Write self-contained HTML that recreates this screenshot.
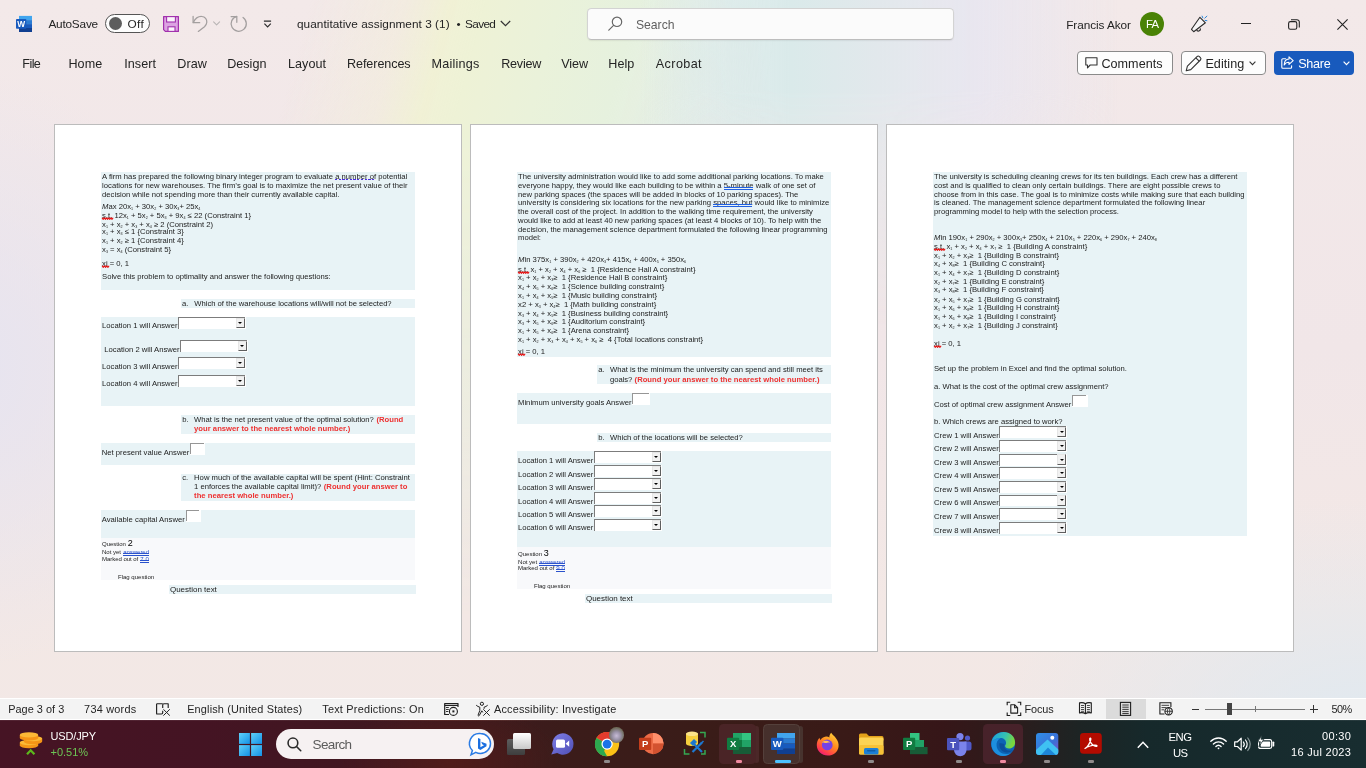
<!DOCTYPE html>
<html lang="en"><head><meta charset="utf-8"><title>quantitative assignment 3 (1) - Word</title>
<style>
*{box-sizing:border-box;margin:0;padding:0}
html,body{width:1366px;height:768px;overflow:hidden}
body{position:relative;font-family:"Liberation Sans",sans-serif;color:#222;
 background:
  radial-gradient(ellipse 380px 230px at 1366px 730px, rgba(224,233,240,1), rgba(224,233,240,0) 100%),
  radial-gradient(ellipse 260px 300px at -40px 370px, rgba(230,228,240,1), rgba(230,228,240,0) 100%),
  linear-gradient(to bottom,#f3e9e9 0%,#f1e6e8 45%,#f3e8e5 80%,#f2e8e6 100%);
}
.t{position:absolute;white-space:pre;}
.ov{position:absolute;left:0;top:0;width:1366px;height:698px;pointer-events:none}
.ovA{background:linear-gradient(105deg,rgba(242,238,216,0) 300px,rgba(242,238,216,.5) 392px,rgba(240,241,212,.95) 436px,rgba(238,242,214,1) 470px,rgba(234,242,218,1) 540px,rgba(230,241,222,1) 616px,rgba(226,238,228,.8) 693px,rgba(226,238,228,0) 770px);-webkit-mask-image:linear-gradient(to bottom,#000 0,#000 130px,rgba(0,0,0,.55) 400px,transparent 620px);mask-image:linear-gradient(to bottom,#000 0,#000 130px,rgba(0,0,0,.55) 400px,transparent 620px)}
.ovB{background:linear-gradient(90deg,rgba(220,235,234,0) 640px,rgba(220,235,234,.9) 730px,rgba(218,234,234,1) 790px,rgba(226,232,236,1) 880px,rgba(232,230,240,.9) 980px,rgba(232,230,240,0) 1120px);-webkit-mask-image:linear-gradient(to bottom,#000 0,#000 90px,rgba(0,0,0,.5) 190px,transparent 330px);mask-image:linear-gradient(to bottom,#000 0,#000 90px,rgba(0,0,0,.5) 190px,transparent 330px)}
.ui{color:#242424}
svg{position:absolute;overflow:visible}
.pg{position:absolute;background:#fff;border:1px solid #bcbcbc;width:408px;height:528px;top:124px}
.bb{position:absolute;background:#e8f3f6}
.lb{position:absolute;background:#f8f9fb}
.d{color:#1c1c1c}
.d sub{font-size:3.700px;vertical-align:baseline;position:relative;top:0.500px;line-height:0;letter-spacing:0}
.red{color:#ee3030;font-weight:bold}
.sq{}
.gu{color:#2a50c8;text-decoration:underline double #2a50c8;text-decoration-thickness:.5px;text-decoration-skip-ink:none}
.gu2{text-decoration:underline double rgba(42,80,200,.75);text-decoration-thickness:.4px;text-decoration-skip-ink:none;text-underline-offset:.2px}
.dd{position:absolute;background:#fff}.dd:before{content:"";position:absolute;left:0;top:0;right:1px;bottom:0;border-top:1px solid #7c7c7c;border-left:1px solid #7c7c7c}
.dd i{position:absolute;right:1px;top:0.500px;z-index:1;width:8.700px;height:10.500px;background:#f1f1f1;border:1px solid #5e5e5e;border-top-color:#e6e6e6;border-left-color:#e6e6e6}
.dd i:after{content:"";position:absolute;left:1.300px;top:3.300px;border:2.100px solid transparent;border-top:2.300px solid #000;border-bottom:0}
.ab{position:absolute;background:#fff}.ab:before{content:"";position:absolute;left:0;top:0;right:1.200px;bottom:1.200px;border-top:1px solid #969696;border-left:1px solid #969696}
</style></head><body>
<div id="app" style="position:absolute;left:0;top:0;width:1366px;height:768px;will-change:transform">
<div class="ov ovA"></div><div class="ov ovB"></div>
<svg style="left:16px;top:15px" width="17" height="18" viewBox="0 0 17 18">
<rect x="3" y="0.900" width="13" height="4.300" fill="#41a5ee"/><rect x="3" y="5.100" width="13" height="4.100" fill="#2b7cd3"/><rect x="3" y="9.100" width="13" height="4" fill="#185abd"/><rect x="3" y="13" width="13" height="4" fill="#103f91"/>
<rect x="0" y="4" width="10.300" height="9.800" rx="0.800" fill="#185abd"/>
<text x="5.150" y="12" font-family="Liberation Sans,sans-serif" font-weight="bold" font-size="8.400" fill="#fff" text-anchor="middle">W</text></svg>
<span class="t ui" style="left:48.40px;top:16px;font-size:11.8px;line-height:16px;letter-spacing:-0.196px;">AutoSave</span>
<div style="position:absolute;left:105px;top:13.5px;width:45px;height:19.5px;border:1px solid #555;border-radius:10px;background:#fdfdfd"></div>
<div style="position:absolute;left:108.5px;top:16.7px;width:13px;height:13px;border-radius:50%;background:#5d5d5d"></div>
<span class="t ui" style="left:127.40px;top:16px;font-size:11.8px;line-height:16px;letter-spacing:0.426px;">Off</span>
<svg style="left:163px;top:16px" width="16" height="16" viewBox="0 0 16 16">
<path d="M0.600 0.600h14.800v14.800H2.300L0.600 13.700z" fill="#dca3e2" stroke="#a130ad" stroke-width="1.200" stroke-linejoin="round"/>
<rect x="3.600" y="0.600" width="8.800" height="5.400" fill="#faf4fb" stroke="#a130ad" stroke-width="1.100"/>
<rect x="5" y="10.800" width="7" height="4.600" fill="#faf4fb" stroke="#a130ad" stroke-width="1.100"/></svg>
<svg style="left:0;top:0" width="280" height="40" viewBox="0 0 280 40" fill="none" stroke="#a39f9f" stroke-width="1.250" stroke-linecap="round" stroke-linejoin="round">
<path d="M193.100 16.400V22.700H199.700"/><path d="M193.300 22.500C195 19 198.500 16.300 201.800 16.500c3.300 0.200 5.200 2.800 5 5.800-0.100 1.800-1 3.200-2.300 4.400L198.300 31.400"/>
<path d="M213.600 21.900l3 3 3-3" stroke="#b9b5b5" stroke-width="1.100"/>
<path d="M243.060 17.470A7.600 7.600 0 1 1 236.730 16.360"/><path d="M231.100 16.600H236.800V22.300"/>
<path d="M263.900 21.100h7.200M264.400 23.700l3.200 3.200 3.200-3.200" stroke="#2b2b2b" stroke-width="1.150" stroke-linecap="butt" stroke-linejoin="miter"/></svg>
<span class="t ui" style="left:297.00px;top:16px;font-size:11.8px;line-height:16px;letter-spacing:0.041px;">quantitative assignment 3 (1)</span>
<span class="t ui" style="left:456.40px;top:16px;font-size:11.8px;line-height:16px;">•</span>
<span class="t ui" style="left:465.00px;top:16px;font-size:11.8px;line-height:16px;letter-spacing:-0.632px;">Saved</span>
<svg style="left:500px;top:20px" width="11" height="7" viewBox="0 0 11 7" fill="none" stroke="#333" stroke-width="1.2"><path d="M0.800 1l4.700 4.700 4.700-4.700"/></svg>
<div style="position:absolute;left:587.3px;top:8.2px;width:367.2px;height:31.4px;background:#fbfbfb;border:1px solid #d3d3d3;border-bottom-color:#bdbdbd;border-radius:4.500px;box-shadow:0 1px 1.500px rgba(0,0,0,.07)"></div>
<svg style="left:608px;top:16px" width="15" height="15" viewBox="0 0 15 15" fill="none" stroke="#666" stroke-width="1.2" stroke-linecap="round"><circle cx="9" cy="5.800" r="4.700"/><path d="M5.600 9.300L0.800 14.200"/></svg>
<span class="t" style="left:636.00px;top:17px;font-size:12.2px;line-height:16px;letter-spacing:-0.026px;color:#5f5f5f;">Search</span>
<span class="t ui" style="left:1066.20px;top:17px;font-size:11.8px;line-height:16px;letter-spacing:-0.065px;">Francis Akor</span>
<div style="position:absolute;left:1139.8px;top:11.7px;width:24.3px;height:24.3px;border-radius:50%;background:#498205"></div>
<span class="t" style="left:1146.10px;top:17px;font-size:11.3px;line-height:15px;letter-spacing:-0.858px;color:#fff;">FA</span>
<svg style="left:1180px;top:0" width="40" height="45" viewBox="1180 0 40 45" fill="none" stroke="#2b2b2b" stroke-width="1.100" stroke-linejoin="round" stroke-linecap="round">
<path d="M1196.600 29.600a1.900 1.900 0 0 0 3.700-0.900" /><path d="M1191.500 29.300L1199.900 17.300l5.500 5.500L1193.700 31.700z" fill="#f7f5f6"/>
<path d="M1202.100 16.100l0.700 1.700M1204.800 18.100l2.100-1.900M1205.100 20.400l1.800 0.300" stroke="#2a86d8" stroke-width="1"/></svg>
<div style="position:absolute;left:1240.5px;top:22.6px;width:10.5px;height:1.1px;background:#222"></div>
<svg style="left:1288px;top:19px" width="12" height="11" viewBox="0 0 12 11" fill="none" stroke="#222" stroke-width="1.100"><rect x="0.600" y="2.600" width="8.200" height="7.700" rx="1.800"/><path d="M3 0.700h5.900a2.400 2.400 0 0 1 2.400 2.400v5.400"/></svg>
<svg style="left:1336.500px;top:19px" width="11" height="11" viewBox="0 0 11 11" fill="none" stroke="#222" stroke-width="1.100"><path d="M0.400 0.400l10.200 10.200M10.600 0.400L0.400 10.600"/></svg>
<span class="t ui" style="left:22.30px;top:56px;font-size:12.6px;line-height:17px;letter-spacing:-0.576px;">File</span>
<span class="t ui" style="left:68.40px;top:56px;font-size:12.6px;line-height:17px;letter-spacing:0.122px;">Home</span>
<span class="t ui" style="left:124.20px;top:56px;font-size:12.6px;line-height:17px;letter-spacing:0.048px;">Insert</span>
<span class="t ui" style="left:177.30px;top:56px;font-size:12.6px;line-height:17px;letter-spacing:0.074px;">Draw</span>
<span class="t ui" style="left:227.20px;top:56px;font-size:12.6px;line-height:17px;letter-spacing:0.013px;">Design</span>
<span class="t ui" style="left:288.00px;top:56px;font-size:12.6px;line-height:17px;letter-spacing:0.028px;">Layout</span>
<span class="t ui" style="left:347.00px;top:56px;font-size:12.6px;line-height:17px;letter-spacing:-0.084px;">References</span>
<span class="t ui" style="left:431.40px;top:56px;font-size:12.6px;line-height:17px;letter-spacing:0.260px;">Mailings</span>
<span class="t ui" style="left:501.30px;top:56px;font-size:12.6px;line-height:17px;letter-spacing:-0.269px;">Review</span>
<span class="t ui" style="left:561.20px;top:56px;font-size:12.6px;line-height:17px;letter-spacing:-0.021px;">View</span>
<span class="t ui" style="left:608.20px;top:56px;font-size:12.6px;line-height:17px;letter-spacing:0.096px;">Help</span>
<span class="t ui" style="left:655.80px;top:56px;font-size:12.6px;line-height:17px;letter-spacing:0.396px;">Acrobat</span>
<div style="position:absolute;left:1077.3px;top:51.3px;width:95.5px;height:23.5px;background:#fdfdfd;border:1px solid #8a8a8a;border-radius:4px"></div>
<svg style="left:1085px;top:57px" width="13" height="12" viewBox="0 0 13 12" fill="none" stroke="#333" stroke-width="1.100" stroke-linejoin="round"><path d="M0.800 0.800h11.200v7.200H5.200L2.500 10.800V8H0.800z"/></svg>
<span class="t ui" style="left:1101.40px;top:56px;font-size:12.6px;line-height:17px;letter-spacing:0.048px;">Comments</span>
<div style="position:absolute;left:1181.2px;top:51.3px;width:84.5px;height:23.5px;background:#fdfdfd;border:1px solid #8a8a8a;border-radius:4px"></div>
<svg style="left:1184.500px;top:54.500px" width="17" height="17" viewBox="0 0 17 17" fill="none" stroke="#333" stroke-width="1.100" stroke-linejoin="round"><path d="M1.200 15.800l1.200-4.600L12 1.600a1.700 1.700 0 0 1 2.400 0l1 1a1.700 1.700 0 0 1 0 2.400L5.800 14.600z"/><path d="M10.800 2.800l3.400 3.400"/></svg>
<span class="t ui" style="left:1205.40px;top:56px;font-size:12.6px;line-height:17px;letter-spacing:0.053px;">Editing</span>
<svg style="left:1249px;top:60.500px" width="7" height="5" viewBox="0 0 7 5" fill="none" stroke="#333" stroke-width="1.100"><path d="M0.600 0.700l2.900 2.900 2.900-2.900"/></svg>
<div style="position:absolute;left:1273.8px;top:51px;width:80px;height:23.8px;background:#185abd;border-radius:4px"></div>
<svg style="left:1281px;top:56px" width="13" height="13" viewBox="0 0 13 13" fill="none" stroke="#fff" stroke-width="1.100" stroke-linejoin="round" stroke-linecap="round"><path d="M4.600 2.800H1.800a1 1 0 0 0-1 1v7.400a1 1 0 0 0 1 1h7.800a1 1 0 0 0 1-1V9.800"/><path d="M8 0.800l4.200 3.800L8 8.400V6.200C5.600 6.200 4.200 7 3.200 9c0-3.400 1.800-5.800 4.800-6z"/></svg>
<span class="t" style="left:1298.20px;top:56px;font-size:12.6px;line-height:17px;letter-spacing:-0.285px;color:#fff;">Share</span>
<svg style="left:1342.500px;top:60.500px" width="7" height="5" viewBox="0 0 7 5" fill="none" stroke="#fff" stroke-width="1.200"><path d="M0.600 0.700l2.900 2.900 2.900-2.900"/></svg>
<div class="pg" style="left:54px"></div>
<div class="pg" style="left:470px"></div>
<div class="pg" style="left:886px"></div>
<div><div class="bb" style="left:101px;top:172px;width:314px;height:118px"></div>
<div class="bb" style="left:181px;top:299px;width:234px;height:9px"></div>
<div class="bb" style="left:101px;top:317px;width:314px;height:89px"></div>
<div class="bb" style="left:181px;top:415px;width:234px;height:19px"></div>
<div class="bb" style="left:101px;top:443px;width:314px;height:21.5px"></div>
<div class="bb" style="left:181px;top:474px;width:234px;height:27px"></div>
<div class="bb" style="left:101px;top:510px;width:314px;height:28px"></div>
<div class="lb" style="left:101px;top:538px;width:314px;height:42px"></div>
<div class="bb" style="left:169px;top:585px;width:247px;height:9px"></div>
<span class="t d" style="left:102.10px;top:172px;font-size:7.67px;line-height:10px;letter-spacing:0.01px;">A firm has prepared the following binary integer program to evaluate a number of potential</span>
<div style="position:absolute;left:335.1px;top:179.3px;width:41px;height:1.2px;background:repeating-linear-gradient(90deg,#4a2ee0 0,#4a2ee0 2.300px,transparent 2.300px,transparent 3.700px)"></div>
<span class="t d" style="left:102.10px;top:181px;font-size:7.67px;line-height:10px;letter-spacing:0.006px;">locations for new warehouses. The firm’s goal is to maximize the net present value of their</span>
<span class="t d" style="left:102.10px;top:190px;font-size:7.67px;line-height:10px;letter-spacing:-0.003px;">decision while not spending more than their currently available capital.</span>
<span class="t d" style="left:102.10px;top:202px;font-size:7.67px;line-height:10px;"><i>M</i>ax 20x<sub>1</sub> + 30x<sub>2</sub> + 30x<sub>3</sub>+ 25x<sub>4</sub></span>
<span class="t d" style="left:102.10px;top:211px;font-size:7.67px;line-height:10px;"><span class="sq">s.t.</span> 12x<sub>1</sub> + 5x<sub>2</sub> + 5x<sub>3</sub> + 9x<sub>4</sub> ≤ 22 (Constraint 1}</span>
<svg style="left:0;top:0" width="1366" height="700" viewBox="0 0 1366 700" fill="none" stroke="#e60f0f" stroke-width="1.050" stroke-linejoin="round"><path d="M102.10 217.70L103.20 219.40L104.30 217.70L105.40 219.40L106.50 217.70L107.60 219.40L108.70 217.70L109.80 219.40L110.90 217.70L112.00 219.40L113.10 217.70"/></svg>
<span class="t d" style="left:102.10px;top:220px;font-size:7.67px;line-height:10px;">x<sub>1</sub> + x<sub>2</sub> + x<sub>3</sub> + x<sub>4</sub> ≥ 2 (Constraint 2)</span>
<span class="t d" style="left:102.10px;top:227px;font-size:7.67px;line-height:10px;">x<sub>1</sub> + x<sub>3</sub> ≤ 1 {Constraint 3}</span>
<span class="t d" style="left:102.10px;top:236px;font-size:7.67px;line-height:10px;">x<sub>1</sub> + x<sub>2</sub> ≥ 1 {Constraint 4}</span>
<span class="t d" style="left:102.10px;top:245px;font-size:7.67px;line-height:10px;">x<sub>3</sub> = x<sub>4</sub> (Constraint 5}</span>
<span class="t d" style="left:102.10px;top:259px;font-size:7.67px;line-height:10px;"><span class="sq">xi</span> = 0, 1</span>
<svg style="left:0;top:0" width="1366" height="700" viewBox="0 0 1366 700" fill="none" stroke="#e60f0f" stroke-width="1.050" stroke-linejoin="round"><path d="M102.10 265.70L103.27 267.40L104.43 265.70L105.60 267.40L106.77 265.70L107.93 267.40L109.10 265.70"/></svg>
<span class="t d" style="left:102.10px;top:272px;font-size:7.67px;line-height:10px;letter-spacing:-0.013px;">Solve this problem to optimality and answer the following questions:</span>
<span class="t d" style="left:182.00px;top:299px;font-size:7.67px;line-height:10px;">a.</span>
<span class="t d" style="left:194.30px;top:299px;font-size:7.67px;line-height:10px;letter-spacing:-0.017px;">Which of the warehouse locations will/will not be selected?</span>
<span class="t d" style="left:102.10px;top:321px;font-size:7.67px;line-height:10px;letter-spacing:0.002px;">Location 1 will Answer</span>
<div class="dd" style="left:178px;top:317px;width:67.8px;height:11.7px"><i></i></div>
<span class="t d" style="left:104.30px;top:345px;font-size:7.67px;line-height:10px;letter-spacing:0.002px;">Location 2 will Answer</span>
<div class="dd" style="left:179.9px;top:340.1px;width:67.8px;height:11.7px"><i></i></div>
<span class="t d" style="left:102.10px;top:362px;font-size:7.67px;line-height:10px;letter-spacing:0.002px;">Location 3 will Answer</span>
<div class="dd" style="left:178px;top:357.3px;width:67.8px;height:11.7px"><i></i></div>
<span class="t d" style="left:102.10px;top:379px;font-size:7.67px;line-height:10px;letter-spacing:0.002px;">Location 4 will Answer</span>
<div class="dd" style="left:178px;top:375.1px;width:67.8px;height:11.7px"><i></i></div>
<span class="t d" style="left:182.20px;top:415px;font-size:7.67px;line-height:10px;">b.</span>
<span class="t d" style="left:194.10px;top:415px;font-size:7.67px;line-height:10px;letter-spacing:-0.005px;">What is the net present value of the optimal solution? </span>
<span class="t d" style="left:376.50px;top:415px;font-size:7.67px;line-height:10px;letter-spacing:-0.006px;color:#ee3030;font-weight:bold;">(Round</span>
<span class="t d" style="left:194.10px;top:424px;font-size:7.67px;line-height:10px;letter-spacing:0.010px;color:#ee3030;font-weight:bold;">your answer to the nearest whole number.)</span>
<span class="t d" style="left:101.70px;top:448px;font-size:7.67px;line-height:10px;letter-spacing:0.017px;">Net present value Answer</span>
<div class="ab" style="left:190px;top:443.1px;width:15px;height:11.8px"></div>
<span class="t d" style="left:182.20px;top:473px;font-size:7.67px;line-height:10px;">c.</span>
<span class="t d" style="left:194.10px;top:473px;font-size:7.67px;line-height:10px;letter-spacing:0.001px;">How much of the available capital will be spent (Hint: Constraint</span>
<span class="t d" style="left:194.10px;top:482px;font-size:7.67px;line-height:10px;letter-spacing:-0.013px;">1 enforces the available capital limit)? </span>
<span class="t d" style="left:323.80px;top:482px;font-size:7.67px;line-height:10px;letter-spacing:0.008px;color:#ee3030;font-weight:bold;">(Round your answer to</span>
<span class="t d" style="left:194.10px;top:491px;font-size:7.67px;line-height:10px;letter-spacing:0.007px;color:#ee3030;font-weight:bold;">the nearest whole number.)</span>
<span class="t d" style="left:101.70px;top:515px;font-size:7.67px;line-height:10px;letter-spacing:0.030px;">Available capital Answer</span>
<div class="ab" style="left:185.6px;top:510px;width:15px;height:11.8px"></div>
<span class="t d" style="left:102.00px;top:540px;font-size:6.05px;line-height:8px;letter-spacing:-0.039px;">Question</span>
<span class="t d" style="left:127.70px;top:537px;font-size:9px;line-height:12px;color:#000;">2</span>
<span class="t d" style="left:102.00px;top:548px;font-size:6.05px;line-height:8px;letter-spacing:-0.024px;">Not yet</span>
<span class="t d" style="left:123.20px;top:548px;font-size:6.05px;line-height:8px;letter-spacing:-0.054px;color:#2a52cc;">answered</span>
<span class="t d" style="left:102.00px;top:555px;font-size:6.05px;line-height:8px;letter-spacing:-0.061px;">Marked out of</span>
<span class="t d" style="left:140.20px;top:555px;font-size:6.05px;line-height:8px;letter-spacing:0.130px;color:#2a52cc;">7.0</span>
<div style="position:absolute;left:123.2px;top:552.8px;width:25.799999999999997px;height:0.7px;background:#2a52cc"></div>
<div style="position:absolute;left:123.2px;top:554.5px;width:25.799999999999997px;height:0.7px;background:#2a52cc"></div>
<div style="position:absolute;left:140.2px;top:559.8px;width:8.800000000000011px;height:0.7px;background:#2a52cc"></div>
<div style="position:absolute;left:140.2px;top:561.5px;width:8.800000000000011px;height:0.7px;background:#2a52cc"></div>
<span class="t d" style="left:118.00px;top:573px;font-size:6.05px;line-height:8px;letter-spacing:-0.017px;">Flag question</span>
<span class="t d" style="left:170.00px;top:584px;font-size:8px;line-height:11px;letter-spacing:-0.026px;">Question text</span></div>
<div><div class="bb" style="left:517px;top:172px;width:314px;height:185px"></div>
<div class="bb" style="left:597px;top:365px;width:234px;height:18.5px"></div>
<div class="bb" style="left:517px;top:393px;width:314px;height:31px"></div>
<div class="bb" style="left:597px;top:433px;width:234px;height:9px"></div>
<div class="bb" style="left:517px;top:450.8px;width:314px;height:96.19999999999999px"></div>
<div class="lb" style="left:517px;top:547px;width:314px;height:41.799999999999955px"></div>
<div class="bb" style="left:585px;top:594px;width:247px;height:8.799999999999955px"></div>
<span class="t d" style="left:518.10px;top:172px;font-size:7.67px;line-height:10px;letter-spacing:0.008px;">The university administration would like to add some additional parking locations. To make</span>
<span class="t d" style="left:518.10px;top:190px;font-size:7.67px;line-height:10px;letter-spacing:-0.006px;">new parking spaces (the spaces will be added in blocks of 10 parking spaces). The</span>
<span class="t d" style="left:518.10px;top:207px;font-size:7.67px;line-height:10px;letter-spacing:-0.006px;">the overall cost of the project. In addition to the walking time requirement, the university</span>
<span class="t d" style="left:518.10px;top:216px;font-size:7.67px;line-height:10px;letter-spacing:0.003px;">would like to add at least 40 new parking spaces (at least 4 blocks of 10). To help with the</span>
<span class="t d" style="left:518.10px;top:225px;font-size:7.67px;line-height:10px;letter-spacing:-0.006px;">decision, the management science department formulated the following linear programming</span>
<span class="t d" style="left:518.10px;top:233px;font-size:7.67px;line-height:10px;letter-spacing:-0.020px;">model:</span>
<span class="t d" style="left:518.10px;top:181px;font-size:7.67px;line-height:10px;letter-spacing:0.01px;">everyone happy, they would like each building to be within a 5-minute walk of one set of</span>
<span class="t d" style="left:518.10px;top:198px;font-size:7.67px;line-height:10px;letter-spacing:0.01px;">university is considering six locations for the new parking spaces, but would like to minimize</span>
<div style="position:absolute;left:724.2px;top:187.1px;width:28.7px;height:0.8px;background:#1f5fe0"></div>
<div style="position:absolute;left:724.2px;top:189px;width:28.7px;height:0.8px;background:#1f5fe0"></div>
<div style="position:absolute;left:713px;top:204.3px;width:39px;height:0.8px;background:#1f5fe0"></div>
<div style="position:absolute;left:713px;top:206.2px;width:39px;height:0.8px;background:#1f5fe0"></div>
<span class="t d" style="left:518.10px;top:255px;font-size:7.67px;line-height:10px;"><i>M</i>in 375x<sub>1</sub> + 390x<sub>2</sub> + 420x<sub>3</sub>+ 415x<sub>4</sub> + 400x<sub>5</sub> + 350x<sub>6</sub></span>
<span class="t d" style="left:518.10px;top:265px;font-size:7.67px;line-height:10px;"><span class="sq">s.t.</span> x<sub>1</sub> + x<sub>2</sub> + x<sub>4</sub> + x<sub>6</sub> ≥  1 {Residence Hall A constraint}</span>
<svg style="left:0;top:0" width="1366" height="700" viewBox="0 0 1366 700" fill="none" stroke="#e60f0f" stroke-width="1.050" stroke-linejoin="round"><path d="M518.10 271.70L519.20 273.40L520.30 271.70L521.40 273.40L522.50 271.70L523.60 273.40L524.70 271.70L525.80 273.40L526.90 271.70L528.00 273.40L529.10 271.70"/></svg>
<span class="t d" style="left:518.10px;top:273px;font-size:7.67px;line-height:10px;">x<sub>1</sub> + x<sub>2</sub> + x<sub>3</sub>≥  1 {Residence Hall B constraint}</span>
<span class="t d" style="left:518.10px;top:282px;font-size:7.67px;line-height:10px;">x<sub>4</sub> + x<sub>5</sub> + x<sub>6</sub>≥  1 {Science building constraint}</span>
<span class="t d" style="left:518.10px;top:291px;font-size:7.67px;line-height:10px;">x<sub>1</sub> + x<sub>4</sub> + x<sub>5</sub>≥  1 {Music building constraint}</span>
<span class="t d" style="left:518.10px;top:300px;font-size:7.67px;line-height:10px;">x2 + x<sub>3</sub> + x<sub>4</sub>≥  1 {Math building constraint}</span>
<span class="t d" style="left:518.10px;top:309px;font-size:7.67px;line-height:10px;">x<sub>3</sub> + x<sub>4</sub> + x<sub>5</sub>≥  1 {Business building constraint}</span>
<span class="t d" style="left:518.10px;top:317px;font-size:7.67px;line-height:10px;">x<sub>3</sub> + x<sub>5</sub> + x<sub>6</sub>≥  1 {Auditorium constraint}</span>
<span class="t d" style="left:518.10px;top:326px;font-size:7.67px;line-height:10px;">x<sub>1</sub> + x<sub>5</sub> + x<sub>6</sub>≥  1 {Arena constraint}</span>
<span class="t d" style="left:518.10px;top:335px;font-size:7.67px;line-height:10px;">x<sub>1</sub> + x<sub>2</sub> + x<sub>3</sub> + x<sub>4</sub> + x<sub>5</sub> + x<sub>6</sub> ≥  4 {Total locations constraint}</span>
<span class="t d" style="left:518.10px;top:347px;font-size:7.67px;line-height:10px;"><span class="sq">xi</span> = 0, 1</span>
<svg style="left:0;top:0" width="1366" height="700" viewBox="0 0 1366 700" fill="none" stroke="#e60f0f" stroke-width="1.050" stroke-linejoin="round"><path d="M518.10 353.70L519.27 355.40L520.43 353.70L521.60 355.40L522.77 353.70L523.93 355.40L525.10 353.70"/></svg>
<span class="t d" style="left:598.30px;top:365px;font-size:7.67px;line-height:10px;">a.</span>
<span class="t d" style="left:610.00px;top:365px;font-size:7.67px;line-height:10px;letter-spacing:-0.004px;">What is the minimum the university can spend and still meet its</span>
<span class="t d" style="left:610.00px;top:375px;font-size:7.67px;line-height:10px;letter-spacing:-0.048px;">goals? </span>
<span class="t d" style="left:634.60px;top:375px;font-size:7.67px;line-height:10px;letter-spacing:0.005px;color:#ee3030;font-weight:bold;">(Round your answer to the nearest whole number.)</span>
<span class="t d" style="left:518.00px;top:398px;font-size:7.67px;line-height:10px;letter-spacing:0.013px;">Minimum university goals Answer</span>
<div class="ab" style="left:632px;top:393.1px;width:18px;height:11.8px"></div>
<span class="t d" style="left:598.30px;top:433px;font-size:7.67px;line-height:10px;">b.</span>
<span class="t d" style="left:610.00px;top:433px;font-size:7.67px;line-height:10px;letter-spacing:-0.009px;">Which of the locations will be selected?</span>
<span class="t d" style="left:518.00px;top:456px;font-size:7.67px;line-height:10px;letter-spacing:-0.003px;">Location 1 will Answer</span>
<div class="dd" style="left:594.1px;top:451.1px;width:67.7px;height:11.5px"><i></i></div>
<span class="t d" style="left:518.00px;top:470px;font-size:7.67px;line-height:10px;letter-spacing:-0.003px;">Location 2 will Answer</span>
<div class="dd" style="left:594.1px;top:465.2px;width:67.7px;height:11.5px"><i></i></div>
<span class="t d" style="left:518.00px;top:483px;font-size:7.67px;line-height:10px;letter-spacing:-0.003px;">Location 3 will Answer</span>
<div class="dd" style="left:594.1px;top:478.4px;width:67.7px;height:11.5px"><i></i></div>
<span class="t d" style="left:518.00px;top:497px;font-size:7.67px;line-height:10px;letter-spacing:-0.003px;">Location 4 will Answer</span>
<div class="dd" style="left:594.1px;top:492.2px;width:67.7px;height:11.5px"><i></i></div>
<span class="t d" style="left:518.00px;top:510px;font-size:7.67px;line-height:10px;letter-spacing:-0.003px;">Location 5 will Answer</span>
<div class="dd" style="left:594.1px;top:505.4px;width:67.7px;height:11.5px"><i></i></div>
<span class="t d" style="left:518.00px;top:523px;font-size:7.67px;line-height:10px;letter-spacing:-0.003px;">Location 6 will Answer</span>
<div class="dd" style="left:594.1px;top:519.2px;width:67.7px;height:11.5px"><i></i></div>
<span class="t d" style="left:518.10px;top:550px;font-size:6.05px;line-height:8px;letter-spacing:-0.039px;">Question</span>
<span class="t d" style="left:543.80px;top:547px;font-size:9px;line-height:12px;color:#000;">3</span>
<span class="t d" style="left:518.10px;top:558px;font-size:6.05px;line-height:8px;letter-spacing:-0.024px;">Not yet</span>
<span class="t d" style="left:539.30px;top:558px;font-size:6.05px;line-height:8px;letter-spacing:-0.054px;color:#2a52cc;">answered</span>
<span class="t d" style="left:518.10px;top:564px;font-size:6.05px;line-height:8px;letter-spacing:-0.061px;">Marked out of</span>
<span class="t d" style="left:556.30px;top:564px;font-size:6.05px;line-height:8px;letter-spacing:0.130px;color:#2a52cc;">9.0</span>
<div style="position:absolute;left:539.3000000000001px;top:562.8px;width:25.799999999999955px;height:0.7px;background:#2a52cc"></div>
<div style="position:absolute;left:539.3000000000001px;top:564.5px;width:25.799999999999955px;height:0.7px;background:#2a52cc"></div>
<div style="position:absolute;left:556.3000000000001px;top:568.8px;width:8.799999999999955px;height:0.7px;background:#2a52cc"></div>
<div style="position:absolute;left:556.3000000000001px;top:570.5px;width:8.799999999999955px;height:0.7px;background:#2a52cc"></div>
<span class="t d" style="left:534.00px;top:582px;font-size:6.05px;line-height:8px;letter-spacing:-0.017px;">Flag question</span>
<span class="t d" style="left:586.00px;top:593px;font-size:8px;line-height:11px;letter-spacing:-0.034px;">Question text</span></div>
<div><div class="bb" style="left:933px;top:172px;width:314px;height:363.6px"></div>
<span class="t d" style="left:934.10px;top:172px;font-size:7.67px;line-height:10px;letter-spacing:-0.001px;">The university is scheduling cleaning crews for its ten buildings. Each crew has a different</span>
<span class="t d" style="left:934.10px;top:181px;font-size:7.67px;line-height:10px;letter-spacing:-0.004px;">cost and is qualified to clean only certain buildings. There are eight possible crews to</span>
<span class="t d" style="left:934.10px;top:190px;font-size:7.67px;line-height:10px;letter-spacing:-0.001px;">choose from in this case. The goal is to minimize costs while making sure that each building</span>
<span class="t d" style="left:934.10px;top:198px;font-size:7.67px;line-height:10px;letter-spacing:-0.004px;">is cleaned. The management science department formulated the following linear</span>
<span class="t d" style="left:934.10px;top:207px;font-size:7.67px;line-height:10px;letter-spacing:-0.005px;">programming model to help with the selection process.</span>
<span class="t d" style="left:934.10px;top:233px;font-size:7.67px;line-height:10px;"><i>M</i>in 190x<sub>1</sub> + 290x<sub>2</sub> + 300x<sub>3</sub>+ 250x<sub>4</sub> + 210x<sub>5</sub> + 220x<sub>6</sub> + 290x<sub>7</sub> + 240x<sub>8</sub></span>
<span class="t d" style="left:934.10px;top:242px;font-size:7.67px;line-height:10px;"><span class="sq">s.t.</span> x<sub>1</sub> + x<sub>2</sub> + x<sub>4</sub> + x<sub>7</sub> ≥  1 {Building A constraint}</span>
<svg style="left:0;top:0" width="1366" height="700" viewBox="0 0 1366 700" fill="none" stroke="#e60f0f" stroke-width="1.050" stroke-linejoin="round"><path d="M934.10 248.70L935.20 250.40L936.30 248.70L937.40 250.40L938.50 248.70L939.60 250.40L940.70 248.70L941.80 250.40L942.90 248.70L944.00 250.40L945.10 248.70"/></svg>
<span class="t d" style="left:934.10px;top:251px;font-size:7.67px;line-height:10px;">x<sub>1</sub> + x<sub>2</sub> + x<sub>3</sub>≥  1 {Building B constraint}</span>
<span class="t d" style="left:934.10px;top:259px;font-size:7.67px;line-height:10px;">x<sub>4</sub> + x<sub>8</sub>≥  1 {Building C constraint}</span>
<span class="t d" style="left:934.10px;top:268px;font-size:7.67px;line-height:10px;">x<sub>1</sub> + x<sub>4</sub> + x<sub>7</sub>≥  1 {Building D constraint}</span>
<span class="t d" style="left:934.10px;top:277px;font-size:7.67px;line-height:10px;">x<sub>2</sub> + x<sub>7</sub>≥  1 {Building E constraint}</span>
<span class="t d" style="left:934.10px;top:285px;font-size:7.67px;line-height:10px;">x<sub>3</sub> + x<sub>8</sub>≥  1 {Building F constraint}</span>
<span class="t d" style="left:934.10px;top:295px;font-size:7.67px;line-height:10px;">x<sub>2</sub> + x<sub>5</sub> + x<sub>7</sub>≥  1 {Building G constraint}</span>
<span class="t d" style="left:934.10px;top:303px;font-size:7.67px;line-height:10px;">x<sub>1</sub> + x<sub>6</sub> + x<sub>8</sub>≥  1 {Building H constraint}</span>
<span class="t d" style="left:934.10px;top:312px;font-size:7.67px;line-height:10px;">x<sub>1</sub> + x<sub>6</sub> + x<sub>8</sub>≥  1 {Building I constraint}</span>
<span class="t d" style="left:934.10px;top:321px;font-size:7.67px;line-height:10px;">x<sub>1</sub> + x<sub>2</sub> + x<sub>7</sub>≥  1 {Building J constraint}</span>
<span class="t d" style="left:934.10px;top:339px;font-size:7.67px;line-height:10px;"><span class="sq">xi</span> = 0, 1</span>
<svg style="left:0;top:0" width="1366" height="700" viewBox="0 0 1366 700" fill="none" stroke="#e60f0f" stroke-width="1.050" stroke-linejoin="round"><path d="M934.10 345.70L935.27 347.40L936.43 345.70L937.60 347.40L938.77 345.70L939.93 347.40L941.10 345.70"/></svg>
<span class="t d" style="left:934.00px;top:364px;font-size:7.67px;line-height:10px;letter-spacing:-0.006px;">Set up the problem in Excel and find the optimal solution.</span>
<span class="t d" style="left:934.00px;top:382px;font-size:7.67px;line-height:10px;letter-spacing:-0.006px;">a. What is the cost of the optimal crew assignment?</span>
<span class="t d" style="left:934.00px;top:400px;font-size:7.67px;line-height:10px;letter-spacing:-0.014px;">Cost of optimal crew assignment Answer</span>
<div class="ab" style="left:1072.3px;top:395.1px;width:15.3px;height:11.6px"></div>
<span class="t d" style="left:934.00px;top:417px;font-size:7.67px;line-height:10px;letter-spacing:-0.013px;">b. Which crews are assigned to work?</span>
<span class="t d" style="left:934.00px;top:431px;font-size:7.67px;line-height:10px;letter-spacing:0.035px;">Crew 1 will Answer</span>
<div class="dd" style="left:999.4px;top:426.3px;width:67.6px;height:11.7px"><i></i></div>
<span class="t d" style="left:934.00px;top:444px;font-size:7.67px;line-height:10px;letter-spacing:0.035px;">Crew 2 will Answer</span>
<div class="dd" style="left:999.4px;top:440px;width:67.6px;height:11.7px"><i></i></div>
<span class="t d" style="left:934.00px;top:458px;font-size:7.67px;line-height:10px;letter-spacing:0.035px;">Crew 3 will Answer</span>
<div class="dd" style="left:999.4px;top:453.9px;width:67.6px;height:11.7px"><i></i></div>
<span class="t d" style="left:934.00px;top:471px;font-size:7.67px;line-height:10px;letter-spacing:0.035px;">Crew 4 will Answer</span>
<div class="dd" style="left:999.4px;top:467.3px;width:67.6px;height:11.7px"><i></i></div>
<span class="t d" style="left:934.00px;top:485px;font-size:7.67px;line-height:10px;letter-spacing:0.035px;">Crew 5 will Answer</span>
<div class="dd" style="left:999.4px;top:481.3px;width:67.6px;height:11.7px"><i></i></div>
<span class="t d" style="left:934.00px;top:498px;font-size:7.67px;line-height:10px;letter-spacing:0.035px;">Crew 6 will Answer</span>
<div class="dd" style="left:999.4px;top:494.5px;width:67.6px;height:11.7px"><i></i></div>
<span class="t d" style="left:934.00px;top:512px;font-size:7.67px;line-height:10px;letter-spacing:0.035px;">Crew 7 will Answer</span>
<div class="dd" style="left:999.4px;top:508.3px;width:67.6px;height:11.7px"><i></i></div>
<span class="t d" style="left:934.00px;top:526px;font-size:7.67px;line-height:10px;letter-spacing:0.035px;">Crew 8 will Answer</span>
<div class="dd" style="left:999.4px;top:522px;width:67.6px;height:11.7px"><i></i></div></div>
<div style="position:absolute;left:0px;top:698px;width:1366px;height:22px;background:#f3f3f3;border-top:1px solid #fff;border-bottom:1px solid #fff"></div>
<span class="t ui" style="left:8.20px;top:702px;font-size:10.9px;line-height:15px;letter-spacing:0.031px;">Page 3 of 3</span>
<span class="t ui" style="left:84.10px;top:702px;font-size:10.9px;line-height:15px;letter-spacing:0.234px;">734 words</span>
<span class="t ui" style="left:187.20px;top:702px;font-size:10.9px;line-height:15px;letter-spacing:0.166px;">English (United States)</span>
<span class="t ui" style="left:322.30px;top:702px;font-size:10.9px;line-height:15px;letter-spacing:0.208px;">Text Predictions: On</span>
<svg style="left:0;top:0" width="700" height="768" viewBox="0 0 700 768" fill="none" stroke="#1f1f1f" stroke-width="1.150" stroke-linejoin="round">
<path d="M162.700 703.700H157.200a0.600 0.600 0 0 0-0.600 0.600v9.100a0.600 0.600 0 0 0 0.600 0.600h4.300a1.200 1.200 0 0 0 1.200-1.200v-2"/><path d="M162.700 708v-3.100a1.200 1.200 0 0 1 1.200-1.200h4.300v4.200"/><path d="M163.400 709.300l6.400 6.300M169.800 709.300l-6.400 6.300" stroke-width="1"/>
<path d="M449 714.500h-4.300v-11h13.300v3.500M444.700 705.400h13.300" stroke-width="1.200"/><path d="M446 707.500h2.800M446 709.500h2.800M446 711.500h2.300" stroke-width="0.900"/><circle cx="453.400" cy="711.400" r="4" stroke-width="1.100"/><rect x="452.400" y="710.400" width="2" height="2" fill="#1f1f1f" stroke="none"/>
<circle cx="481.900" cy="703.800" r="1.600" stroke-width="1"/><path d="M476.200 705.200c0.800 1 2.600 1.700 3.600 2v3.300l-1.700 4.500c-0.300 0.900 0.800 1.300 1.200 0.500l2.500-4.700 1 1.600M487.700 705.200c-0.800 1-2.600 1.700-3.600 2v1.600" stroke-width="1"/><path d="M483.300 709.300l6.400 6.400M489.700 709.300l-6.400 6.400" stroke-width="0.950"/></svg>
<span class="t ui" style="left:494.00px;top:702px;font-size:10.9px;line-height:15px;letter-spacing:0.168px;">Accessibility: Investigate</span>
<div style="position:absolute;left:1106px;top:699px;width:40px;height:20px;background:#dbdbdb"></div>
<svg style="left:1000px;top:0" width="200" height="768" viewBox="1000 0 200 768" fill="none" stroke="#1f1f1f" stroke-width="1.100">
<path d="M1007.200 705.200v-3h3M1017.700 702.200h3v3M1020.700 712.500v3h-3M1010.200 715.500h-3v-3" stroke-width="1.150"/><path d="M1010.800 704.800h4l2.800 2.800v5.500h-6.800z M1014.600 704.800v3h3" stroke-linejoin="round"/>
<path d="M1085.400 703.800c-1.500-1.200-4-1.400-5.900-0.900v10c1.900-0.500 4.400-0.300 5.900 0.900 1.500-1.200 4-1.400 5.900-0.900v-10c-1.900-0.500-4.400-0.300-5.900 0.900zM1085.400 703.800v10" stroke-linejoin="round"/><path d="M1081 705.500h3M1081 707.500h3M1081 709.500h3M1081 711.300h3M1086.900 705.500h3M1086.900 707.500h3M1086.900 709.500h3M1086.900 711.300h3" stroke-width="0.800"/>
<rect x="1120.400" y="702.400" width="10.200" height="13"/><path d="M1122.300 705h6.400M1122.300 707.200h6.400M1122.300 709.400h6.400M1122.300 711.600h6.400M1122.300 713.500h6.400" stroke-width="0.850"/>
<path d="M1164.500 714h-4.600v-11.200h11v4.200"/><path d="M1161.500 705.300h7.600M1161.500 707.600h5M1161.500 709.800h2.500" stroke-width="0.850"/><circle cx="1168.600" cy="711.300" r="3.700" fill="#f3f3f3"/><path d="M1165 711.300h7.200M1168.600 707.600c-1.700 2.200-1.700 5.200 0 7.400M1168.600 707.600c1.700 2.200 1.700 5.200 0 7.400" stroke-width="0.800"/>
</svg>
<span class="t ui" style="left:1024.50px;top:702px;font-size:10.9px;line-height:15px;letter-spacing:-0.137px;">Focus</span>
<div style="position:absolute;left:1192px;top:708.5px;width:7px;height:1px;background:#333"></div>
<div style="position:absolute;left:1204.5px;top:708.5px;width:100px;height:1px;background:#777"></div>
<div style="position:absolute;left:1255px;top:706px;width:1px;height:6px;background:#777"></div>
<div style="position:absolute;left:1227px;top:703px;width:5px;height:12px;background:#444"></div>
<div style="position:absolute;left:1309.5px;top:708.5px;width:8px;height:1px;background:#333"></div>
<div style="position:absolute;left:1313px;top:705px;width:1px;height:8px;background:#333"></div>
<span class="t ui" style="left:1331.50px;top:702px;font-size:10.9px;line-height:15px;letter-spacing:-0.605px;">50%</span>
<div style="position:absolute;left:0px;top:720px;width:1366px;height:48px;border-top:1px solid rgba(255,255,255,.07);background:radial-gradient(ellipse 110px 60px at 450px 40px, rgba(96,30,22,.55), rgba(96,30,22,0) 100%),linear-gradient(90deg,#461424 0%,#441423 15%,#3f1820 30%,#3b1c1a 42%,#3a1c18 52%,#391a17 62%,#361618 69%,#2c1c1c 74%,#1d2424 79%,#16292b 84%,#182d30 100%)"></div>
<svg style="left:0;top:720px" width="60" height="48" viewBox="0 720 60 48"><path d="M19.8 742.6v3a9.200 2.700 0 0 0 18.400 0v-3z" fill="#f59516"/><ellipse cx="29" cy="742.6" rx="9.200" ry="2.700" fill="#fcb936"/><path d="M23.8 738.6v3a9.200 2.700 0 0 0 18.400 0v-3z" fill="#f59516"/><ellipse cx="33" cy="738.6" rx="9.200" ry="2.700" fill="#fcb936"/><path d="M19.8 734.9v3a9.200 2.700 0 0 0 18.400 0v-3z" fill="#f59516"/><ellipse cx="29" cy="734.9" rx="9.200" ry="2.700" fill="#fcb936"/><path d="M27 754.200l3.700-3.900 3.700 3.900" fill="none" stroke="#5cb81c" stroke-width="2.300"/></svg>
<span class="t" style="left:50.60px;top:729px;font-size:11px;line-height:15px;letter-spacing:-0.179px;color:#fff;">USD/JPY</span>
<span class="t" style="left:50.60px;top:745px;font-size:11px;line-height:15px;letter-spacing:-0.036px;color:#6cc655;">+0.51%</span>
<svg style="left:239px;top:733px" width="23" height="23" viewBox="0 0 23 23"><defs><linearGradient id="wg" x1="0" y1="0" x2="1" y2="1"><stop offset="0" stop-color="#5fd0f8"/><stop offset="1" stop-color="#1391e6"/></linearGradient></defs>
<rect x="0" y="0" width="10.900" height="10.900" fill="url(#wg)"/><rect x="12.100" y="0" width="10.900" height="10.900" fill="url(#wg)"/><rect x="0" y="12.100" width="10.900" height="10.900" fill="url(#wg)"/><rect x="12.100" y="12.100" width="10.900" height="10.900" fill="url(#wg)"/></svg>
<div style="position:absolute;left:275.8px;top:729px;width:218.4px;height:30.3px;background:#f6f1f2;border-radius:15.200px"></div>
<svg style="left:287.300px;top:737.200px" width="14.800" height="14.800" viewBox="0 0 14 14" fill="none" stroke="#2a2a2a" stroke-width="1.500" stroke-linecap="round"><circle cx="5.600" cy="5.600" r="4.600"/><path d="M9 9l4 4"/></svg>
<span class="t" style="left:312.50px;top:736px;font-size:13.5px;line-height:18px;letter-spacing:-0.629px;color:#5c5c5c;">Search</span>
<svg style="left:468.500px;top:732px" width="23" height="25" viewBox="0 0 23 25"><path d="M11.500 1.500a10 10 0 0 1 0 20c-1.700 0-3.300-0.400-4.700-1.100L2 22.800l1.400-4.300A10 10 0 0 1 11.500 1.500z" fill="#fff" stroke="#2a7be4" stroke-width="1.500"/>
<path d="M9 6l2.400 0.900v8.300l3.600-2-1.800-0.900-1-2.500 5.300 1.900v2.500L11.400 18 9 16.600z" fill="#1b6fe0"/></svg>
<div style="position:absolute;left:507.1px;top:739.4px;width:17.7px;height:15.3px;background:linear-gradient(#5e5e5e,#3e3e3e);border-radius:1.500px"></div>
<div style="position:absolute;left:513px;top:733px;width:17.9px;height:15.6px;background:linear-gradient(#ffffff,#c9c9c9);border-radius:1.500px"></div>
<svg style="left:551px;top:733px" width="23" height="22" viewBox="0 0 23 22"><defs><linearGradient id="cg" x1="0" y1="0" x2="1" y2="1"><stop offset="0" stop-color="#7f7fe8"/><stop offset="1" stop-color="#4f4fb5"/></linearGradient></defs>
<path d="M11.800 0.300a10.700 10.700 0 1 1-5.600 19.800L0.300 21.500l2.300-5.200A10.700 10.700 0 0 1 11.800 0.300z" fill="url(#cg)"/><rect x="5" y="6.600" width="9" height="8.200" rx="1.500" fill="#fff"/><path d="M14.600 10.700l3.600-3.100v6.200z" fill="#fff"/></svg>
<svg style="left:594.800px;top:732px" width="24.200" height="24.200" viewBox="0 0 24 24"><circle cx="12" cy="12" r="12" fill="#fbc116"/>
<path d="M12 12L1.600 6A12 12 0 0 1 22.400 6z" fill="#e33b2e"/><path d="M12 12L1.600 6A12 12 0 0 0 7.300 23.050z" fill="#2da94f"/><path d="M12 12h10.400" stroke="#fbc116"/>
<path d="M12 6h10.400a12 12 0 0 0-20.800 0z" fill="#e33b2e"/>
<path d="M1.600 6l5.200 9 -0 0L12 24A12 12 0 0 1 1.600 6z" fill="#2da94f"/>
<circle cx="12" cy="12" r="5.600" fill="#fff"/><circle cx="12" cy="12" r="4.400" fill="#1a73e8"/></svg>
<div style="position:absolute;left:608.5px;top:726.8px;width:15.5px;height:16px;border-radius:50%;background:radial-gradient(circle at 50% 55%,#c7bcd6 0%,#9a92a8 35%,#6d6a58 70%,#85805f 100%)"></div>
<div style="position:absolute;left:603.75px;top:760.3px;width:6.3px;height:2.5px;background:#8f8a8a;border-radius:1.300px"></div>
<svg style="left:638.800px;top:733px" width="25" height="22" viewBox="0 0 25 22"><circle cx="14" cy="10.600" r="10.600" fill="#ed6c47"/><path d="M14 0a10.600 10.600 0 0 1 10.600 10.600H14z" fill="#ff8f6b"/><path d="M14 21.200a10.600 10.600 0 0 0 10.600-10.600H14z" fill="#d35230"/>
<rect x="0" y="4.800" width="12.200" height="12.200" rx="1" fill="#c43e1c"/><text x="6.100" y="14.400" font-family="Liberation Sans,sans-serif" font-weight="bold" font-size="9.500" fill="#fff" text-anchor="middle">P</text></svg>
<svg style="left:683px;top:731px" width="24" height="25" viewBox="0 0 24 25"><path d="M3 2.500v10c0 1.400 2.700 2.500 6 2.500s6-1.100 6-2.500v-10z" fill="#f6cf3e"/><ellipse cx="9" cy="2.800" rx="6" ry="2.300" fill="#fbe38a"/>
<path d="M17 1.500h5v5M1.500 18v5h5M22 19v4h-4" fill="none" stroke="#35a852" stroke-width="1.500"/><path d="M9.500 11.500l9.500 9.500M19 11.500l-9.500 9.500" stroke="#1d78d0" stroke-width="2.200"/><path d="M8 12l3-3 2 2-3 3zM20.500 10l-3 3" stroke="#1d78d0" stroke-width="1.500" fill="#1d78d0"/></svg>
<div style="position:absolute;left:754px;top:725.5px;width:5px;height:37.5px;background:#4b2828;border-radius:4px"></div>
<div style="position:absolute;left:719px;top:724.4px;width:37px;height:39.5px;background:#4a2426;border-radius:4.500px"></div>
<svg style="left:727px;top:733.200px" width="24" height="21" viewBox="0 0 24 21"><rect x="6" y="0" width="9" height="7" fill="#21a366"/><rect x="15" y="0" width="9" height="7" fill="#33c481"/><rect x="6" y="7" width="9" height="7" fill="#107c41"/><rect x="15" y="7" width="9" height="7" fill="#21a366"/><rect x="6" y="14" width="18" height="7" fill="#185c37"/>
<rect x="0" y="4.800" width="12.200" height="12.200" rx="1" fill="#107c41"/><text x="6.100" y="14.300" font-family="Liberation Sans,sans-serif" font-weight="bold" font-size="9.500" fill="#fff" text-anchor="middle">X</text></svg>
<div style="position:absolute;left:735.85px;top:760.3px;width:6.3px;height:2.5px;background:#f08aa0;border-radius:1.300px"></div>
<div style="position:absolute;left:798px;top:725.5px;width:5px;height:37.5px;background:#47332e;border-radius:4px"></div>
<div style="position:absolute;left:763.3px;top:724.4px;width:37px;height:39.5px;background:#46302c;border-radius:4.500px;border:1px solid #54403b"></div>
<svg style="left:771px;top:733.200px" width="24" height="21" viewBox="0 0 24 21"><rect x="6" y="0" width="18" height="5.500" fill="#41a5ee"/><rect x="6" y="5.300" width="18" height="5.300" fill="#2b7cd3"/><rect x="6" y="10.500" width="18" height="5.300" fill="#185abd"/><rect x="6" y="15.700" width="18" height="5.300" fill="#103f91"/>
<rect x="0" y="4.800" width="12.400" height="12.200" rx="1" fill="#185abd"/><text x="6.200" y="14.300" font-family="Liberation Sans,sans-serif" font-weight="bold" font-size="9.500" fill="#fff" text-anchor="middle">W</text></svg>
<div style="position:absolute;left:775px;top:760.3px;width:15.7px;height:2.5px;background:#4cc2ff;border-radius:1.300px"></div>
<svg style="left:815.500px;top:731.500px" width="23.500" height="24" viewBox="0 0 24 24"><defs><linearGradient id="fg" x1="0.800" y1="0" x2="0.200" y2="1"><stop offset="0" stop-color="#ffd43a"/><stop offset="0.450" stop-color="#ff8a1f"/><stop offset="0.800" stop-color="#ff3b4e"/><stop offset="1" stop-color="#e31587"/></linearGradient></defs>
<path d="M15.500 0.500c1 2 3 3 4.500 5 2.500 3 3.500 6 3 9.500-0.800 5-5.300 8.800-11 8.800C5.800 23.800 0.800 19 0.800 13c0-2.800 1-5.600 2.800-7.400 0 1 0.400 1.800 1 2.400C5.600 6 7.500 4.600 10.200 4.300c1.300-0.100 2.600 0.200 3.500 1-0.300-1.800 0.600-3.600 1.800-4.800z" fill="url(#fg)"/>
<circle cx="11.500" cy="13" r="5.500" fill="#7542e5"/><path d="M6 10.500c2-2.500 6.500-2.500 8.500 0-2-0.500-3 0.500-4.500 0.500s-2.500-0.800-4-0.500z" fill="#ffbd4f"/></svg>
<svg style="left:858.800px;top:733px" width="24.500" height="21.500" viewBox="0 0 24.500 21.500"><path d="M0 2a1.500 1.500 0 0 1 1.500-1.500h6l2.500 2.500H23a1.500 1.500 0 0 1 1.500 1.500v3H0z" fill="#e3a21a"/><rect x="0" y="4.500" width="24.500" height="17" rx="1.500" fill="#fcd354"/><rect x="0" y="12" width="24.500" height="9.500" rx="1.500" fill="#f7c136"/><rect x="5" y="15" width="14.500" height="6.500" rx="1.500" fill="#1c7fd6"/><rect x="8" y="17" width="8.500" height="1.500" rx="0.700" fill="#0f5ea8"/></svg>
<div style="position:absolute;left:867.75px;top:760.3px;width:6.3px;height:2.5px;background:#8f8a8a;border-radius:1.300px"></div>
<svg style="left:902.600px;top:733px" width="24.600" height="21.200" viewBox="0 0 24.600 21.200"><rect x="7" y="0" width="9.500" height="7.500" fill="#33c481"/><rect x="7" y="7" width="14" height="7.500" fill="#21a366"/><rect x="7" y="14" width="17.600" height="7.200" fill="#185c37"/>
<rect x="0" y="4.800" width="12.200" height="12.200" rx="1" fill="#107c41"/><text x="6.100" y="14.300" font-family="Liberation Sans,sans-serif" font-weight="bold" font-size="9.500" fill="#fff" text-anchor="middle">P</text></svg>
<svg style="left:947px;top:732.500px" width="24.500" height="22.500" viewBox="0 0 24.500 22.500"><circle cx="20.500" cy="5" r="2.600" fill="#5059c9"/><rect x="16" y="8.500" width="8.500" height="9" rx="2.500" fill="#5059c9"/><circle cx="13" cy="3.600" r="3.600" fill="#7b83eb"/><path d="M7 8.500h12.500v8.500a6 6 0 0 1-12.500 0z" fill="#7b83eb"/>
<rect x="0" y="5" width="12.200" height="12.200" rx="1" fill="#4b53bc"/><text x="6.100" y="14.500" font-family="Liberation Sans,sans-serif" font-weight="bold" font-size="9.500" fill="#fff" text-anchor="middle">T</text></svg>
<div style="position:absolute;left:955.85px;top:760.3px;width:6.3px;height:2.5px;background:#8f8a8a;border-radius:1.300px"></div>
<div style="position:absolute;left:983px;top:724.4px;width:39.8px;height:39.5px;background:#47222a;border-radius:4.500px"></div>
<svg style="left:991px;top:732px" width="24.200" height="24" viewBox="0 0 24 24"><defs><linearGradient id="eg" x1="0" y1="0" x2="1" y2="0.300"><stop offset="0" stop-color="#1b9de2"/><stop offset="0.600" stop-color="#35c1b1"/><stop offset="1" stop-color="#7ad63e"/></linearGradient></defs>
<circle cx="12" cy="12" r="12" fill="#0c63b5"/><path d="M0.500 9.500C2 3.500 7 0 12.500 0 19 0 24 4.500 24 10.500c0 3.500-2.500 6-6 6-2.500 0-4-1-4-2.500 0-1 1-1.500 1-3C15 8 12.500 6 9.500 6 5.500 6 2 8.500 0.500 9.500z" fill="url(#eg)"/>
<path d="M0.500 9.500C2 8 5.500 6 9.500 6c-3 1.500-4.500 4.500-4 8 0.600 4.500 4.500 8 9.500 8 2 0 4-0.500 5.500-1.500C18.500 22.800 15.500 24 12 24A12 12 0 0 1 0.500 9.500z" fill="#1d8fe0"/><path d="M8.500 11c-1 4 1.500 9 6.500 9.500 3 0.300 5.500-1 7-2.500-2 1-5 1-7-0.500-2-1.500-2.500-4-1.500-5.500z" fill="#0b4f9c"/></svg>
<div style="position:absolute;left:999.65px;top:760.3px;width:6.3px;height:2.5px;background:#f08aa0;border-radius:1.300px"></div>
<svg style="left:1036px;top:733px" width="22.300" height="22" viewBox="0 0 22.300 22"><defs><linearGradient id="pg" x1="0" y1="0" x2="1" y2="1"><stop offset="0" stop-color="#2f8fe8"/><stop offset="0.600" stop-color="#3b6fd6"/><stop offset="1" stop-color="#8a4fc4"/></linearGradient><clipPath id="pc"><rect x="0" y="0" width="22.300" height="22" rx="3"/></clipPath></defs>
<rect x="0" y="0" width="22.300" height="22" rx="3" fill="url(#pg)"/><g clip-path="url(#pc)"><path d="M-1 18L11.500 6.500 23 17v6H-1z" fill="#3fc1f2"/><path d="M4 23l8-8.500 9 8.500z" fill="#1d86d8"/></g><circle cx="16.300" cy="4.700" r="2" fill="#fff"/></svg>
<div style="position:absolute;left:1044.05px;top:760.3px;width:6.3px;height:2.5px;background:#8f8a8a;border-radius:1.300px"></div>
<svg style="left:1080px;top:733.200px" width="21.800" height="20.800" viewBox="0 0 21.800 20.800"><rect width="21.800" height="20.800" rx="3.500" fill="#b30b00"/><path d="M5 15.500c2.500-1 5-5.500 5.800-9 0.300-1.500-0.900-2-1.100-0.700-0.300 2.200 1.800 5.500 4.300 6.900 1.500 0.800 3.200 0.700 3 0-0.300-0.900-3.800-0.700-6.800 0.300-2.300 0.800-5 2-5.200 2.500z" fill="none" stroke="#fff" stroke-width="1.300" stroke-linejoin="round"/></svg>
<div style="position:absolute;left:1087.85px;top:760.3px;width:6.3px;height:2.5px;background:#8f8a8a;border-radius:1.300px"></div>
<svg style="left:1136.500px;top:740.500px" width="12" height="7.500" viewBox="0 0 12 7.500" fill="none" stroke="#fff" stroke-width="1.500"><path d="M0.800 6.700L6 1.300l5.200 5.400"/></svg>
<span class="t" style="left:1168.50px;top:730px;font-size:11.3px;line-height:15px;letter-spacing:-0.496px;color:#fff;">ENG</span>
<span class="t" style="left:1172.90px;top:746px;font-size:11.3px;line-height:15px;letter-spacing:-0.499px;color:#fff;">US</span>
<svg style="left:1209.500px;top:737.300px" width="17" height="12.500" viewBox="0 0 17 12.500" fill="none" stroke="#fff" stroke-width="1.350" stroke-linecap="round"><path d="M0.800 4.300c4.300-4.400 11.100-4.400 15.400 0"/><path d="M3.400 7c2.900-2.900 7.300-2.900 10.200 0"/><path d="M5.900 9.500c1.500-1.500 3.700-1.500 5.200 0"/><circle cx="8.500" cy="11.300" r="0.900" fill="#fff" stroke="none"/></svg>
<svg style="left:1233.500px;top:737px" width="17" height="14.500" viewBox="0 0 17 14.500" fill="none" stroke="#fff" stroke-width="1.200" stroke-linejoin="round" stroke-linecap="round"><path d="M0.700 4.800h2.800l3.700-3.600v11.900L3.500 9.500H0.700z"/><path d="M9.400 5c1 1.300 1 3.200 0 4.500"/><path d="M11.500 3c2 2.500 2 6 0 8.500"/><path d="M13.800 1c3 3.800 3 8.700 0 12.500" stroke="#8c9a9b"/></svg>
<svg style="left:1250px;top:720px" width="30" height="48" viewBox="1250 720 30 48" fill="none" stroke="#fff" stroke-width="1.200" stroke-linejoin="round">
<rect x="1258.600" y="739.700" width="13.100" height="8.700" rx="2"/><rect x="1260.600" y="741.400" width="9.600" height="5.300" rx="0.700" fill="#fff" stroke="none"/><path d="M1273.400 742.300v3.400" stroke-width="1.700" stroke-linecap="round"/>
<path d="M1261.900 735l-4.200 6.800h2.700l-1.500 4.800 5-7.300h-2.900z" fill="#fff" stroke="#182c2f" stroke-width="0.800"/></svg>
<span class="t" style="left:1322.10px;top:729px;font-size:11px;line-height:15px;letter-spacing:0.315px;color:#fff;">00:30</span>
<span class="t" style="left:1291.00px;top:745px;font-size:11px;line-height:15px;letter-spacing:0.302px;color:#fff;">16 Jul 2023</span>
</div>
</body></html>
